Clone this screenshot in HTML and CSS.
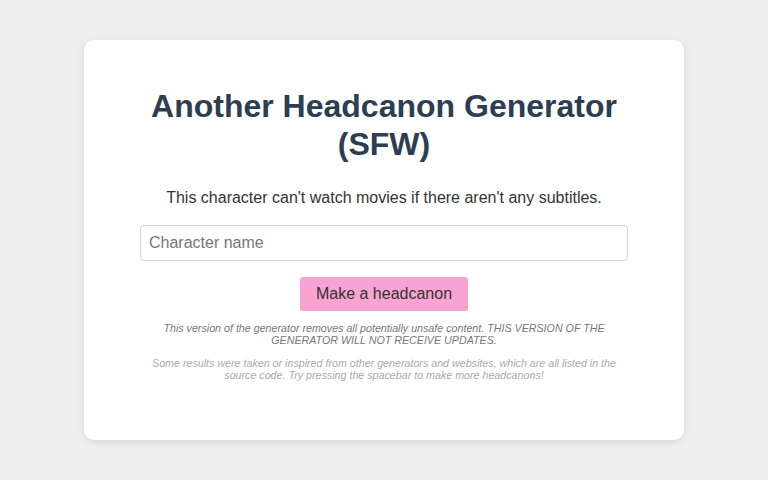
FILE: index.html
```html
<!DOCTYPE html>
<html lang="en">
<head>
    <meta charset="UTF-8">
    <meta name="viewport" content="width=device-width, initial-scale=1.0">
    <title>Another Headcanon Generator (SFW)</title>
    <link rel="stylesheet" href="styles.css">
</head>
<body>
    <div class="card">
        <h1 class="title">Another Headcanon Generator (SFW)</h1>
        <p id="result" class="result">This character can't watch movies if there aren't any subtitles.</p>
        <input type="text" class="name-input" placeholder="Character name">
        <button class="make-btn" type="button">Make a headcanon</button>
        <p class="note">This version of the generator removes all potentially unsafe content. THIS VERSION OF THE GENERATOR WILL NOT RECEIVE UPDATES.</p>
        <p class="note faded">Some results were taken or inspired from other generators and websites, which are all listed in the source code. Try pressing the spacebar to make more headcanons!</p>
    </div>
</body>
</html>
```

FILE: styles.css
```css
* {
    margin: 0;
    padding: 0;
    box-sizing: border-box;
    font-family: "Liberation Sans", Arial, sans-serif;
}

body {
    background-color: #efefef;
    min-height: 100vh;
    display: flex;
    justify-content: center;
    align-items: center;
}

.card {
    width: 600px;
    min-height: 400px;
    padding: 47px 56px;
    background: white;
    border-radius: 10px;
    box-shadow: 0 2px 8px rgba(0, 0, 0, 0.1);
    display: flex;
    flex-direction: column;
    align-items: center;
    text-align: center;
}

.title {
    font-size: 32px;
    line-height: 38px;
    font-weight: bold;
    color: #2c3e50;
}

.result {
    margin-top: 25px;
    font-size: 16px;
    line-height: 20px;
    color: #333;
}

.name-input {
    width: 100%;
    height: 36px;
    margin-top: 17px;
    padding: 0 8px;
    font-size: 16px;
    color: #333;
    border: 1px solid #d6d6d6;
    border-radius: 4px;
    outline: none;
}

.name-input::placeholder {
    color: #777;
}

.make-btn {
    margin-top: 16px;
    width: 168px;
    height: 34px;
    font-size: 16px;
    color: #333;
    background-color: #f9a3d2;
    border: none;
    border-radius: 3px;
    cursor: pointer;
}

.note {
    margin-top: 11px;
    font-size: 10.7px;
    line-height: 12px;
    font-style: italic;
    color: #777;
    padding: 0 8px;
}

.note.faded {
    margin-top: 11px;
    color: #aaa;
}
```
